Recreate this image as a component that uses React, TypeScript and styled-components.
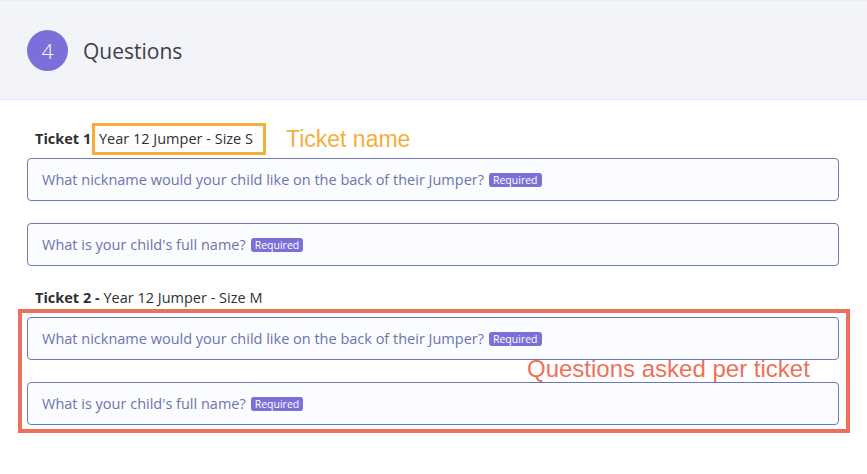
import React from "react";
import styled, { createGlobalStyle } from "styled-components";

const GlobalStyle = createGlobalStyle`
  html, body {
    margin: 0;
    padding: 0;
    background: #ffffff;
    font-family: "Open Sans", "Noto Sans", sans-serif;
  }
`;

type Question = {
  label: string;
  required: boolean;
};

type Ticket = {
  number: number;
  name: string;
  highlightName?: boolean;
  highlightQuestions?: boolean;
};

const questions: Question[] = [
  { label: "What nickname would your child like on the back of their Jumper?", required: true },
  { label: "What is your child's full name?", required: true },
];

const tickets: Ticket[] = [
  { number: 1, name: "Year 12 Jumper - Size S", highlightName: true },
  { number: 2, name: "Year 12 Jumper - Size M", highlightQuestions: true },
];

function App() {
  return (
    <>
      <GlobalStyle />
      <Page>
        <Header>
          <StepBadge>4</StepBadge>
          <HeaderTitle>Questions</HeaderTitle>
        </Header>
        <Body>
          {tickets.map((ticket) => (
            <TicketGroup key={ticket.number}>
              <TicketLabel>
                <strong>
                  Ticket {ticket.number}
                  {ticket.highlightName ? "" : " -"}
                </strong>{" "}
                {ticket.highlightName ? (
                  <NameHighlight>
                    {ticket.name}
                    <OrangeNote>Ticket name</OrangeNote>
                  </NameHighlight>
                ) : (
                  ticket.name
                )}
              </TicketLabel>
              <QuestionList>
                {questions.map((q, index) => (
                  <QuestionField key={index}>
                    <Placeholder>{q.label}</Placeholder>
                    {q.required && <RequiredTag>Required</RequiredTag>}
                  </QuestionField>
                ))}
                {ticket.highlightQuestions && (
                  <>
                    <RedFrame />
                    <RedNote>Questions asked per ticket</RedNote>
                  </>
                )}
              </QuestionList>
            </TicketGroup>
          ))}
        </Body>
      </Page>
    </>
  );
}

export default App;

const Page = styled.div`
  width: 867px;
  min-height: 474px;
  background: #ffffff;
`;

const Header = styled.header`
  display: flex;
  align-items: center;
  gap: 15px;
  height: 100px;
  box-sizing: border-box;
  padding: 1px 0 0 27px;
  background: #f3f4f9;
  border-top: 1px solid #eceef5;
  border-bottom: 1px solid #dde4f2;
`;

const StepBadge = styled.div`
  width: 41px;
  height: 41px;
  border-radius: 50%;
  background: #7b6fd9;
  color: #ffffff;
  display: flex;
  align-items: center;
  justify-content: center;
  font-size: 21px;
  font-weight: 300;
`;

const HeaderTitle = styled.h2`
  margin: 0;
  font-size: 21px;
  font-weight: 400;
  color: #3e3e46;
`;

const Body = styled.main`
  display: flex;
  flex-direction: column;
  gap: 22px;
  padding: 29px 28px 0 27px;
`;

const TicketGroup = styled.section`
  display: flex;
  flex-direction: column;
  gap: 10px;
`;

const TicketLabel = styled.div`
  padding-left: 8px;
  font-size: 14.5px;
  line-height: 19px;
  color: #2f2f35;

  strong {
    font-weight: 700;
  }
`;

const NameHighlight = styled.span`
  position: relative;
  margin-left: 4px;

  &::after {
    content: "";
    position: absolute;
    top: -6px;
    bottom: -7px;
    left: -7px;
    right: -13px;
    border: 3px solid #f7ac3b;
  }
`;

const OrangeNote = styled.span`
  position: absolute;
  left: 187px;
  top: -1px;
  white-space: nowrap;
  font-family: "Liberation Sans", Arial, sans-serif;
  font-size: 23px;
  line-height: 23px;
  color: #f7ad3d;
`;

const QuestionList = styled.div`
  position: relative;
  display: flex;
  flex-direction: column;
  gap: 22px;
`;

const QuestionField = styled.div`
  display: flex;
  align-items: center;
  gap: 5px;
  height: 43px;
  box-sizing: border-box;
  padding: 0 14px;
  background: #fbfcff;
  border: 1px solid #7077b5;
  border-radius: 4px;
`;

const Placeholder = styled.span`
  font-size: 14.5px;
  color: #6c74ad;
`;

const RequiredTag = styled.span`
  padding: 0 4px;
  height: 14px;
  line-height: 14px;
  border-radius: 3px;
  background: #7b6fd9;
  color: #ffffff;
  font-size: 10.5px;
`;

const RedFrame = styled.div`
  position: absolute;
  top: -8px;
  bottom: -8px;
  left: -9px;
  right: -11px;
  border: 4px solid #ee705c;
  pointer-events: none;
`;

const RedNote = styled.span`
  position: absolute;
  left: 500px;
  top: 38px;
  white-space: nowrap;
  font-family: "Liberation Sans", Arial, sans-serif;
  font-size: 24px;
  color: #ee705c;
`;
